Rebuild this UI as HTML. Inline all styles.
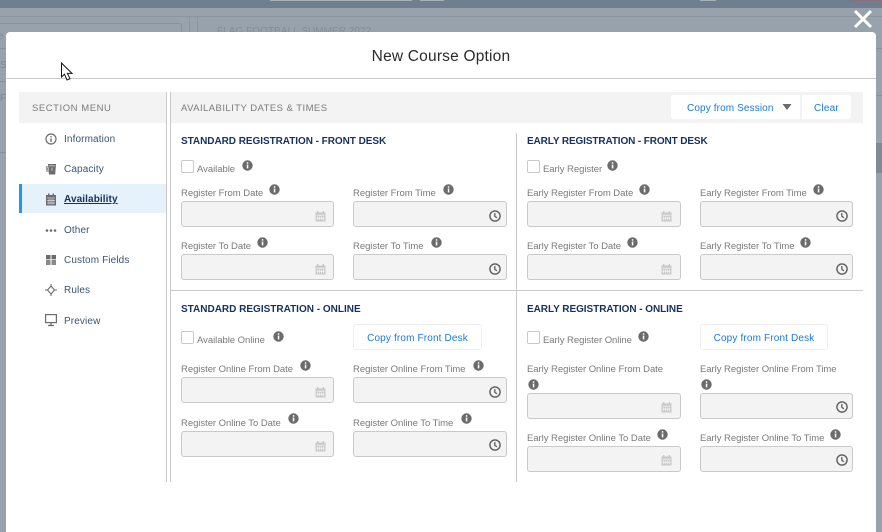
<!DOCTYPE html>
<html><head><meta charset="utf-8">
<style>
html,body{margin:0;padding:0}
body{width:882px;height:532px;overflow:hidden;position:relative;background:#98a2ac;font-family:"Liberation Sans",sans-serif}
div,span,svg{position:absolute;box-sizing:border-box}
.t{white-space:nowrap;line-height:14px;height:14px;font-size:9.5px;letter-spacing:-.04px;margin-top:1px}
.l{color:#7a7a7a}
.h{color:#16325c;font-weight:bold;font-size:10px;letter-spacing:-.05px}
.m{color:#3b5478;left:64px;font-size:10px;letter-spacing:.12px}
.i{width:153px;height:26px;background:#f3f3f3;border:1px solid #c9c9c9;border-radius:3px}
.c{width:13px;height:13px;border:1px solid #c9c9c9;border-radius:2px;background:#fff}
.b{background:#fff;border:1px solid #eee;border-radius:3px;color:#1b7ad6;text-align:center;font-size:10px;letter-spacing:.15px;line-height:27px;height:26px;width:129px;white-space:nowrap}
.n{width:11px;height:11px}
.cal{width:11px;height:11px}
.clk{width:12px;height:12px}
</style></head><body>
<svg width="0" height="0" style="position:absolute">
<symbol id="info" viewBox="0 0 11 11"><circle cx="5.5" cy="5.5" r="5.2" fill="#6b6b6b"/><rect x="4.8" y="2.2" width="1.5" height="1.5" fill="#fff"/><rect x="4.8" y="4.6" width="1.5" height="3.8" fill="#fff"/></symbol>
<symbol id="cal" viewBox="0 0 11 11"><rect x="0.5" y="1.5" width="10" height="9" fill="#c8c8c8"/><rect x="2" y="0" width="1.4" height="2.5" fill="#c8c8c8"/><rect x="7.6" y="0" width="1.4" height="2.5" fill="#c8c8c8"/><path d="M1.5 4.2h8M2.5 5.5v3.8M4.5 5.5v3.8M6.5 5.5v3.8M8.5 5.5v3.8M1.5 7.2h8" stroke="#f3f3f3" stroke-width=".8" fill="none"/></symbol>
<symbol id="clk" viewBox="0 0 12 12"><circle cx="6" cy="6" r="5.1" fill="none" stroke="#5f5f5f" stroke-width="1.4"/><path d="M5.8 3v3.2l2.1 1.7" fill="none" stroke="#5f5f5f" stroke-width="1.3"/></symbol>
</svg>

<!-- background -->
<div style="left:0;top:0;width:882px;height:8px;background:#6f7f8f"></div>
<div style="left:270px;top:0;width:142px;height:1px;background:#a9b2bb"></div>
<div style="left:420px;top:0;width:24px;height:1px;background:#a9b2bb"></div>
<div style="left:700px;top:0;width:16px;height:1px;background:#a9b2bb"></div>
<div style="left:852px;top:0;width:30px;height:1px;background:#8d6f7c"></div>
<div style="left:0;top:16px;width:882px;height:1px;background:#8a95a0"></div>
<div style="left:0;top:23px;width:182px;height:10px;border:1px solid #87929d;border-left:0;border-bottom:0;border-radius:0 3px 0 0"></div>
<div style="left:189px;top:16px;width:1px;height:17px;background:#8a95a0"></div>
<div style="left:197px;top:16px;width:1px;height:17px;background:#8a95a0"></div>
<div class="t" style="left:217px;top:24px;color:#828d98;font-size:10px;letter-spacing:.05px">FLAG FOOTBALL SUMMER 2022</div>
<div style="left:876px;top:143px;width:6px;height:30px;background:#7f8a95"></div>
<div style="left:0;top:48px;width:6px;height:1px;background:#87929d"></div>
<div style="left:0;top:81px;width:6px;height:1px;background:#87929d"></div>
<div style="left:0;top:152px;width:6px;height:1px;background:#87929d"></div>
<div style="left:876px;top:48px;width:6px;height:1px;background:#87929d"></div>
<div style="left:876px;top:95px;width:6px;height:1px;background:#87929d"></div>
<div class="t" style="left:-2px;top:29px;color:#7f8a95;font-size:10px">e</div>
<div class="t" style="left:0;top:58px;color:#7f8a95;font-size:10px">S</div>
<div class="t" style="left:0;top:91px;color:#7f8a95;font-size:10px">F</div>
<svg style="left:853px;top:9px" width="20" height="20" viewBox="0 0 20 20"><path d="M2 2L18 18M18 2L2 18" stroke="#fff" stroke-width="3"/></svg>

<!-- modal -->
<div style="left:6px;top:32px;width:870px;height:500px;background:#fff;border-radius:4px 4px 0 0"></div>
<div class="t" style="left:6px;width:870px;text-align:center;top:46px;height:20px;line-height:20px;font-size:15.5px;letter-spacing:.2px;color:#2b2b2b">New Course Option</div>
<div style="left:6px;top:78px;width:870px;height:1px;background:#c9c9c9"></div>
<svg style="left:60px;top:62px" width="15" height="21" viewBox="0 0 15 21"><path d="M1.5 1V15L4.5 12.2L7 18L10 16.7L7.4 11.4H12Z" fill="#fff" stroke="#111" stroke-width="1"/></svg>

<!-- header strips -->
<div style="left:19px;top:92px;width:147px;height:31px;background:#f3f3f3"></div>
<div style="left:171px;top:92px;width:692px;height:31px;background:#f3f3f3"></div>
<div class="t" style="left:32px;top:101px;color:#7a7a7a;font-size:9.5px;letter-spacing:.55px">SECTION MENU</div>
<div class="t" style="left:181px;top:101px;color:#7a7a7a;font-size:9.5px;letter-spacing:.45px">AVAILABILITY DATES &amp; TIMES</div>
<div style="left:671px;top:95px;width:129px;height:24px;background:#fff;border-radius:3px 0 0 3px"></div>
<div style="left:802px;top:95px;width:49px;height:24px;background:#fff;border-radius:0 3px 3px 0"></div>
<div class="t" style="left:687px;top:101px;color:#1b7ad6;font-size:10px;letter-spacing:.12px">Copy from Session</div>
<svg style="left:782px;top:104px" width="10" height="7" viewBox="0 0 10 7"><path d="M0.5 0H9.5L5 6Z" fill="#6b6b6b"/></svg>
<div class="t" style="left:814px;top:101px;color:#1b7ad6;font-size:10px;letter-spacing:.2px">Clear</div>

<!-- structure lines -->
<div style="left:166px;top:92px;width:1px;height:390px;background:#c9c9c9"></div>
<div style="left:170px;top:92px;width:1px;height:390px;background:#c9c9c9"></div>
<div style="left:516px;top:133px;width:1px;height:349px;background:#c9c9c9"></div>
<div style="left:171px;top:290px;width:692px;height:1px;background:#c9c9c9"></div>

<!-- menu -->
<div style="left:19px;top:184px;width:147px;height:29px;background:#e5f1fb"></div>
<div style="left:19px;top:184px;width:3px;height:29px;background:#2196f3"></div>
<div class="t m" style="top:132px">Information</div>
<div class="t m" style="top:162px">Capacity</div>
<div class="t m" style="top:192px;color:#16325c;font-weight:bold;text-decoration:underline;letter-spacing:.1px">Availability</div>
<div class="t m" style="top:223px">Other</div>
<div class="t m" style="top:253px">Custom Fields</div>
<div class="t m" style="top:283px">Rules</div>
<div class="t m" style="top:314px">Preview</div>
<svg style="left:45px;top:133px" width="12" height="12" viewBox="0 0 12 12"><circle cx="6" cy="6" r="5" fill="none" stroke="#6b6b6b" stroke-width="1.2"/><path d="M6 3v1.3M6 5.2V9" stroke="#6b6b6b" stroke-width="1.3"/></svg>
<svg style="left:45px;top:163px" width="12" height="12" viewBox="0 0 12 12"><path d="M3 1H11L10.2 11.5H4L3.7 8.5H1.2L.8 3.5H3Z" fill="#6b6b6b"/><path d="M3.6 2.8H10M1.8 4.6H3.4V7.4H2ZM7 4.5V8" stroke="#c9c9c9" stroke-width=".9" fill="none"/></svg>
<svg style="left:45px;top:193px" width="12" height="13" viewBox="0 0 12 13"><rect x="1" y="2" width="10" height="10.5" fill="#6b6b6b"/><rect x="3" y="0.5" width="1.5" height="2.5" fill="#6b6b6b"/><rect x="7.5" y="0.5" width="1.5" height="2.5" fill="#6b6b6b"/><path d="M2 5h8M2 7.5h8M2 10h8M4 6v5.5M6 6v5.5M8 6v5.5" stroke="#d6dfe7" stroke-width=".7"/></svg>
<svg style="left:45px;top:228px" width="12" height="5" viewBox="0 0 12 5"><circle cx="2" cy="2.5" r="1.3" fill="#6b6b6b"/><circle cx="6" cy="2.5" r="1.3" fill="#6b6b6b"/><circle cx="10" cy="2.5" r="1.3" fill="#6b6b6b"/></svg>
<svg style="left:46px;top:255px" width="10" height="10" viewBox="0 0 10 10"><rect width="4.5" height="4" fill="#6b6b6b"/><rect x="5.5" width="4.5" height="4" fill="#6b6b6b"/><rect y="4.6" width="4.5" height="5.4" fill="#8a8a8a"/><rect x="5.5" y="4.6" width="4.5" height="5.4" fill="#8a8a8a"/></svg>
<svg style="left:45px;top:283px" width="12" height="14" viewBox="0 0 12 14"><path d="M6 3L9.5 7L6 11L2.5 7Z" fill="none" stroke="#6b6b6b" stroke-width="1.1"/><path d="M0 7H2.5M9.5 7H12M6 1V3M6 11V13" stroke="#6b6b6b" stroke-width="1.1"/></svg>
<svg style="left:45px;top:314px" width="12" height="13" viewBox="0 0 12 13"><rect x="0.6" y="0.6" width="10.8" height="8" fill="none" stroke="#6b6b6b" stroke-width="1.2"/><path d="M6 8.6V11M3 11.5H9" stroke="#6b6b6b" stroke-width="1.3"/></svg>

<!-- section headings -->
<div class="t h" style="left:181px;top:134px">STANDARD REGISTRATION - FRONT DESK</div>
<div class="t h" style="left:527px;top:134px;letter-spacing:-.12px">EARLY REGISTRATION - FRONT DESK</div>
<div class="t h" style="left:181px;top:302px;letter-spacing:0">STANDARD REGISTRATION - ONLINE</div>
<div class="t h" style="left:527px;top:302px">EARLY REGISTRATION - ONLINE</div>

<!-- checkboxes -->
<div class="c" style="left:181px;top:160px"></div><div class="t l" style="left:197px;top:162px">Available</div>
<div class="c" style="left:527px;top:160px"></div><div class="t l" style="left:543px;top:162px">Early Register</div>
<div class="c" style="left:181px;top:331px"></div><div class="t l" style="left:197px;top:333px">Available Online</div>
<div class="c" style="left:527px;top:331px"></div><div class="t l" style="left:543px;top:333px">Early Register Online</div>
<div class="b" style="left:353px;top:324px">Copy from Front Desk</div>
<div class="b" style="left:700px;top:324px;width:128px">Copy from Front Desk</div>

<!-- labels -->
<div class="t l" style="left:181px;top:186px">Register From Date</div>
<div class="t l" style="left:353px;top:186px">Register From Time</div>
<div class="t l" style="left:181px;top:239px">Register To Date</div>
<div class="t l" style="left:353px;top:239px">Register To Time</div>
<div class="t l" style="left:527px;top:186px">Early Register From Date</div>
<div class="t l" style="left:700px;top:186px">Early Register From Time</div>
<div class="t l" style="left:527px;top:239px">Early Register To Date</div>
<div class="t l" style="left:700px;top:239px">Early Register To Time</div>
<div class="t l" style="left:181px;top:362px">Register Online From Date</div>
<div class="t l" style="left:353px;top:362px">Register Online From Time</div>
<div class="t l" style="left:181px;top:416px">Register Online To Date</div>
<div class="t l" style="left:353px;top:416px">Register Online To Time</div>
<div class="t l" style="left:527px;top:362px">Early Register Online From Date</div>
<div class="t l" style="left:700px;top:362px">Early Register Online From Time</div>
<div class="t l" style="left:527px;top:431px">Early Register Online To Date</div>
<div class="t l" style="left:700px;top:431px">Early Register Online To Time</div>

<!-- inputs -->
<div class="i" style="left:181px;top:201px"></div><div class="i" style="left:353px;top:201px;width:154px"></div>
<div class="i" style="left:181px;top:254px"></div><div class="i" style="left:353px;top:254px;width:154px"></div>
<div class="i" style="left:527px;top:201px;width:154px"></div><div class="i" style="left:700px;top:201px"></div>
<div class="i" style="left:527px;top:254px;width:154px"></div><div class="i" style="left:700px;top:254px"></div>
<div class="i" style="left:181px;top:377px"></div><div class="i" style="left:353px;top:377px;width:154px"></div>
<div class="i" style="left:181px;top:431px"></div><div class="i" style="left:353px;top:431px;width:154px"></div>
<div class="i" style="left:527px;top:393px;width:154px"></div><div class="i" style="left:700px;top:393px"></div>
<div class="i" style="left:527px;top:446px;width:154px"></div><div class="i" style="left:700px;top:446px"></div>

<!-- calendar icons -->
<svg class="cal" style="left:315px;top:211px"><use href="#cal"/></svg>
<svg class="cal" style="left:315px;top:264px"><use href="#cal"/></svg>
<svg class="cal" style="left:661px;top:211px"><use href="#cal"/></svg>
<svg class="cal" style="left:661px;top:264px"><use href="#cal"/></svg>
<svg class="cal" style="left:315px;top:387px"><use href="#cal"/></svg>
<svg class="cal" style="left:315px;top:441px"><use href="#cal"/></svg>
<svg class="cal" style="left:661px;top:402px"><use href="#cal"/></svg>
<svg class="cal" style="left:661px;top:455px"><use href="#cal"/></svg>

<!-- clock icons -->
<svg class="clk" style="left:489px;top:210px"><use href="#clk"/></svg>
<svg class="clk" style="left:489px;top:263px"><use href="#clk"/></svg>
<svg class="clk" style="left:836px;top:210px"><use href="#clk"/></svg>
<svg class="clk" style="left:836px;top:263px"><use href="#clk"/></svg>
<svg class="clk" style="left:489px;top:386px"><use href="#clk"/></svg>
<svg class="clk" style="left:489px;top:439px"><use href="#clk"/></svg>
<svg class="clk" style="left:836px;top:401px"><use href="#clk"/></svg>
<svg class="clk" style="left:836px;top:454px"><use href="#clk"/></svg>

<!-- info icons -->
<svg class="n" style="left:242px;top:160px"><use href="#info"/></svg>
<svg class="n" style="left:607px;top:160px"><use href="#info"/></svg>
<svg class="n" style="left:269px;top:184px"><use href="#info"/></svg>
<svg class="n" style="left:443px;top:184px"><use href="#info"/></svg>
<svg class="n" style="left:257px;top:237px"><use href="#info"/></svg>
<svg class="n" style="left:431px;top:237px"><use href="#info"/></svg>
<svg class="n" style="left:639px;top:184px"><use href="#info"/></svg>
<svg class="n" style="left:813px;top:184px"><use href="#info"/></svg>
<svg class="n" style="left:627px;top:237px"><use href="#info"/></svg>
<svg class="n" style="left:800px;top:237px"><use href="#info"/></svg>
<svg class="n" style="left:273px;top:331px"><use href="#info"/></svg>
<svg class="n" style="left:638px;top:331px"><use href="#info"/></svg>
<svg class="n" style="left:300px;top:360px"><use href="#info"/></svg>
<svg class="n" style="left:473px;top:360px"><use href="#info"/></svg>
<svg class="n" style="left:288px;top:413px"><use href="#info"/></svg>
<svg class="n" style="left:461px;top:413px"><use href="#info"/></svg>
<svg class="n" style="left:528px;top:379px"><use href="#info"/></svg>
<svg class="n" style="left:701px;top:379px"><use href="#info"/></svg>
<svg class="n" style="left:657px;top:429px"><use href="#info"/></svg>
<svg class="n" style="left:830px;top:429px"><use href="#info"/></svg>
</body></html>
